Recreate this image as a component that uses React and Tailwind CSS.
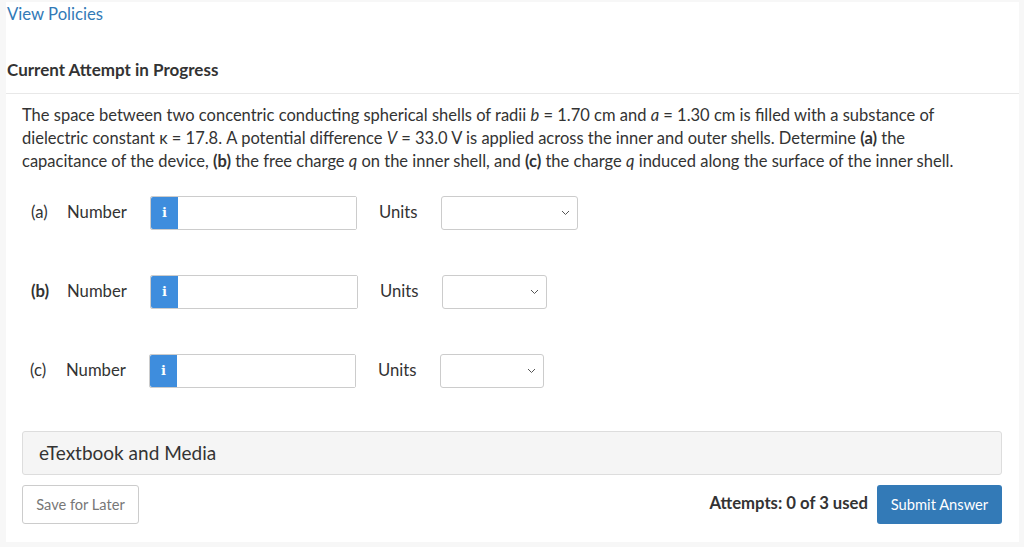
import React from "react";

function InfoBtn() {
  return (
    <div className="w-[27px] h-full bg-[#3e8ddd] rounded-l-[2px] flex items-center justify-center text-white font-bold text-[13px]" style={{ fontFamily: "'DejaVu Serif', serif" }}>
      i
    </div>
  );
}

function Row({ label, bold, inputW, selectW, shift }) {
  return (
    <div className={`flex items-center h-[34px] ${shift ? "-ml-[1px]" : ""}`}>
      <span className={`w-[36px] text-[16.7px] text-[#333] ${bold ? "font-bold" : ""}`}>{label}</span>
      <span className="text-[16.7px] text-[#333] w-[83px]">Number</span>
      <div className="flex h-[34px] border border-[#ccc] rounded-[2px]" style={{ width: inputW }}>
        <InfoBtn />
        <div className="flex-1 bg-white" />
      </div>
      <span className="text-[16.7px] text-[#333] ml-[22px] w-[62px]">Units</span>
      <div className="h-[34px] border border-[#ccc] rounded-[3px] bg-white flex items-center justify-end pr-[7px]" style={{ width: selectW }}>
        <svg width="9" height="6" viewBox="0 0 9 6"><path d="M1 1l3.5 3.5L8 1" stroke="#555" strokeWidth="1" fill="none" /></svg>
      </div>
    </div>
  );
}

export default function App() {
  return (
    <div className="w-[1024px] h-[547px] bg-[#f7f7f7] pt-[2px] pl-[6px] pr-[5px]" style={{ fontFamily: "Lato, 'Open Sans', sans-serif" }}>
      <div className="bg-white h-[540px] flex flex-col">
        <div className="pl-[1px] pt-[2px] text-[16.7px] text-[#337ab7] leading-[20px]">View Policies</div>
        <div className="mt-[36px] pl-[1px] text-[17px] font-bold text-[#333] leading-[20px]">Current Attempt in Progress</div>
        <div className="mt-[13px] border-t border-[#e8e8e8]" />
        <div className="pl-[16px] pr-[16px]">
          <p className="mt-[10px] text-[16.5px] leading-[23px] text-[#333] w-[960px]">
            The space between two concentric conducting spherical shells of radii <i>b</i> = 1.70 cm and <i>a</i> = 1.30 cm is filled with a substance of dielectric constant κ = 17.8. A potential difference <i>V</i> = 33.0 V is applied across the inner and outer shells. Determine <b>(a)</b> the capacitance of the device, <b>(b)</b> the free charge <i>q</i> on the inner shell, and <b>(c)</b> the charge <i>q</i> induced along the surface of the inner shell.
          </p>
          <div className="pl-[9px] mt-[23px] flex flex-col gap-[45px]">
            <Row label="(a)" inputW={207} selectW={137} />
            <Row label="(b)" bold inputW={208} selectW={105} />
            <Row label="(c)" inputW={207} selectW={104} shift />
          </div>
          <div className="mt-[43px] h-[44px] bg-[#f5f5f5] border border-[#ddd] rounded-[3px] flex items-center pl-[16px] text-[19px] text-[#333] w-[980px]">
            eTextbook and Media
          </div>
          <div className="mt-[10px] flex items-center w-[980px]">
            <div className="h-[39px] w-[117px] border border-[#ccc] rounded-[3px] flex items-center justify-center text-[14.6px] text-[#777]">Save for Later</div>
            <div className="ml-auto text-[16.7px] font-bold text-[#333] mr-[9px] mb-[2px]">Attempts: 0 of 3 used</div>
            <div className="h-[39px] w-[125px] bg-[#337ab7] rounded-[3px] flex items-center justify-center text-[14.7px] text-white">Submit Answer</div>
          </div>
        </div>
      </div>
    </div>
  );
}
